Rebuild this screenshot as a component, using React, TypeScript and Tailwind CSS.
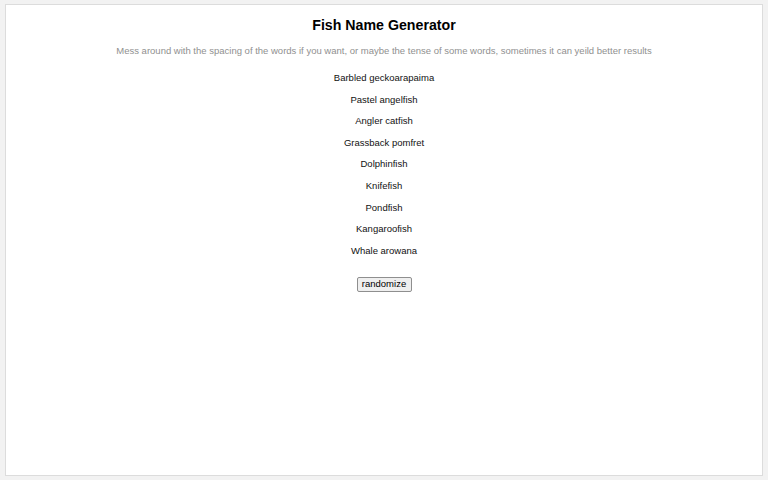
import { useState } from "react"

const names = [
  "Barbled geckoarapaima",
  "Pastel angelfish",
  "Angler catfish",
  "Grassback pomfret",
  "Dolphinfish",
  "Knifefish",
  "Pondfish",
  "Kangaroofish",
  "Whale arowana",
]

export default function App() {
  const [list, setList] = useState(names)

  function randomize() {
    setList([...list].sort(() => Math.random() - 0.5))
  }

  return (
    <div className="h-[480px] w-[768px] bg-[#f2f2f2] px-[5px] pt-[4px] pb-[4px] font-['Liberation_Sans',Arial,sans-serif]">
      <div className="h-full border border-[#dcdcdc] bg-white flex flex-col items-center">
        {/* Title */}
        <h1 className="mt-[10px] text-[14.2px] font-bold leading-[20px] text-black">
          Fish Name Generator
        </h1>

        <p className="mt-[10px] text-[9.5px] leading-[12px] text-[#909090]">
          Mess around with the spacing of the words if you want, or maybe the tense of some words, sometimes it can yeild better results
        </p>

        {/* Names */}
        <ul className="mt-[15px] flex flex-col items-center gap-[9.6px]">
          {list.map((n) => (
            <li key={n} className="text-[9.5px] leading-[12px] text-[#111]">
              {n}
            </li>
          ))}
        </ul>

        <button
          onClick={randomize}
          className="mt-[20px] h-[15px] w-[55px] text-[9.5px] leading-[12px] text-black bg-[#efefef] border border-[#8f8f8f] rounded-[2px]"
        >
          randomize
        </button>
      </div>
    </div>
  )
}
